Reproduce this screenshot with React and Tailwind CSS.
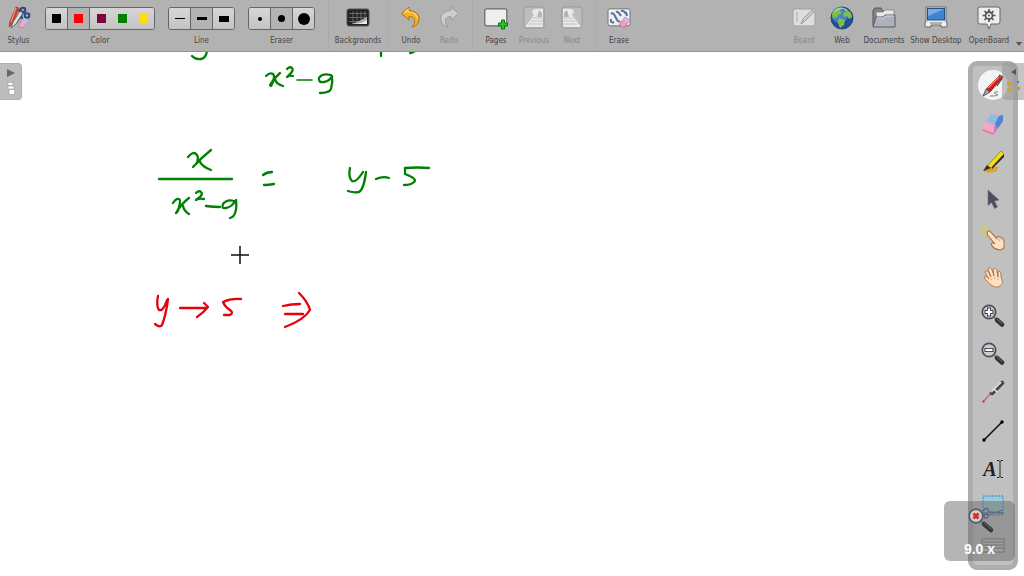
const COLORS = [
  { name: 'Black', css: 'bg-black' },
  { name: 'Red', css: 'bg-[#ff0000]' },
  { name: 'Purple', css: 'bg-[#800040]' },
  { name: 'Green', css: 'bg-[#008000]' },
  { name: 'Yellow', css: 'bg-[#ffdd00]' },
];

const LINES = [
  { name: 'Fine line', css: 'w-[10px] h-px' },
  { name: 'Medium line', css: 'w-[10px] h-[3px]' },
  { name: 'Strong line', css: 'w-[10px] h-[6px]' },
];

const ERASERS = [
  { name: 'Small eraser', css: 'size-1 rounded-full' },
  { name: 'Medium eraser', css: 'size-[7px] rounded-full' },
  { name: 'Large eraser', css: 'size-3 rounded-full' },
];

const Icon = ({ children, size = 24 }) => (
  <svg width={size} height={size} viewBox="0 0 24 24" fill="none" aria-hidden="true" className="shrink-0">
    {children}
  </svg>
);

const StylusIcon = () => (
  <Icon>
    <path d="M12 3 15 13M17 5 9 17" stroke="#2e4372" strokeWidth="2.2" />
    <circle cx="16" cy="4" r="2.3" stroke="#2b4680" strokeWidth="2" />
    <circle cx="20" cy="9.500" r="2.300" stroke="#2b4680" strokeWidth="2" />
    <path d="M9 1 12 2 6 17 2 21 3 15Z" fill="#d9412c" stroke="#8f3027" strokeWidth=".6" />
    <path d="m9 2-5 14" stroke="#f2a08f" />
    <path d="M13 5 16 7 9 18 4 22 6 16Z" fill="#dedede" stroke="#555" strokeWidth=".8" />
    <path d="m12 19 5-7 5 2-5 7-4 1Z" fill="#f6a9c7" stroke="#a77993" strokeWidth=".6" />
    <path d="m15 14.500 2-2.500 5 2-2 3Z" fill="#a8c4ef" />
  </Icon>
);

const BackgroundsIcon = () => (
  <Icon>
    <rect x="1" y="3" width="22" height="17" rx="2" fill="#222" stroke="#555" />
    <path d="M3 7.500h18M3 11.500h18M3 15.500h18M7 5v13M11 5v13M15 5v13M19 5v13" stroke="#777" strokeWidth=".8" />
    <path d="m5 18 6-2 10-5v7Z" fill="#aaa" />
    <path d="m7 18 8-1 6-3v4Z" fill="#ececec" />
  </Icon>
);

const UndoIcon = () => (
  <Icon>
    <path
      d="M2.500 7.500 10 1v3.500c7 .5 10.500 4 10 9.500c-.5 4-3.500 6.500-7 7c4-4 4-10.500-3-10.500V14Z"
      fill="#f5b01c"
      stroke="#a8731d"
      strokeLinejoin="round"
    />
    <path d="M5 7 9 3.500v2.500c6 .3 9 3 9.500 7" stroke="#ffdd76" strokeWidth="1.200" />
  </Icon>
);

const RedoIcon = () => (
  <Icon>
    <path
      d="M21.500 7.500 14 1v3.500c-7 .5-10.500 4-10 9.500c.5 4 3.500 6.500 7 7c-4-4-4-10.500 3-10.500V14Z"
      fill="#cecece"
      stroke="#9a9a9a"
      strokeLinejoin="round"
    />
  </Icon>
);

const PagesIcon = () => (
  <Icon>
    <rect x=".8" y="2.800" width="22" height="17" rx="2" fill="#eee" stroke="#666" strokeWidth="1.200" />
    <path d="M17.500 14h3v3h3v3h-3v3h-3v-3h-3v-3h3Z" fill="#25c225" stroke="#087a08" />
  </Icon>
);

const PreviousIcon = () => (
  <Icon>
    <rect x="2" y="1" width="20" height="21" rx="2" fill="#bdbdbd" stroke="#999" />
    <path d="M3 21 12 9 10 6c0-3 4-4 11-3v18Z" fill="#e9e9e9" />
    <path d="M11 12h10M9 15h12M7 18h14" stroke="#c2c2c2" />
    <path d="M17 4 20 7v4h-5Z" fill="#b5b5b5" />
  </Icon>
);

const NextIcon = () => (
  <Icon>
    <rect x="2" y="1" width="20" height="21" rx="2" fill="#bdbdbd" stroke="#999" />
    <path d="m21 21-9-12 2-3c0-3-4-4-11-3v18Z" fill="#e9e9e9" />
    <path d="M13 12H3M15 15H3M17 18H3" stroke="#c2c2c2" />
    <path d="M7 4 4 7v4h5Z" fill="#b5b5b5" />
  </Icon>
);

const ErasePageIcon = () => (
  <Icon>
    <rect x="1" y="2.800" width="22" height="17" rx="2" fill="#f0f0f0" stroke="#777" />
    <path d="M4 13c-1 3 1 4 3 3M4 8c2-2 3 0 5 4s3 4 4 3M9 6c2-1 3 1 5 4M14 5c3-1 4 1 5 3M19 6l1 4" stroke="#56749d" strokeWidth="2" />
    <path d="m12 19 6-8 5 3-6 8Z" fill="#f49ac6" stroke="#a9668a" strokeWidth=".7" />
    <path d="m16 14 2-3 5 3-2 3Z" fill="#d9b4df" />
  </Icon>
);

const BoardIcon = () => (
  <Icon>
    <rect x="1" y="3" width="22" height="17" rx="2" fill="#dedede" stroke="#a1a1a1" />
    <path d="M5 6v10" stroke="#aaa" />
    <path d="m9 18 2-5 9-9 2 2-9 9Z" fill="#ccc" stroke="#999" />
  </Icon>
);

const WebIcon = () => (
  <Icon>
    <circle cx="12" cy="12" r="11" fill="#214d9d" stroke="#29486e" />
    <circle cx="10" cy="9" r="8" fill="#4482cc" />
    <path d="M2 8c2-5 6-7 10-6l-2 3 2 2-4 2-1 3-3-1-1 3ZM14 3c5 1 8 4 8 8l-3 2-2-3-3 1-1-4 3-1ZM9 12l6 2-1 5-4 3-2-5Z" fill="#82bf3d" />
    <path d="M4 6c3-4 9-5 13-2" stroke="#c4def3" strokeWidth="1.200" opacity=".7" />
  </Icon>
);

const DocumentsIcon = () => (
  <Icon>
    <path d="M1 20V4l2-2h6l2 3h8v5" fill="#82858c" stroke="#555" />
    <path d="M4 6h7l2-2h9v14H5Z" fill="#e8e8e8" stroke="#777" strokeWidth=".7" />
    <path d="m1 21 3-10h7l2-2h10v12H1Z" fill="#aeb1ba" stroke="#555b66" />
    <path d="M5 12h6l3-2h8" stroke="#d8d9de" />
  </Icon>
);

const DesktopIcon = () => (
  <Icon>
    <path d="M2 1h20v15h1v5h-6v-2H7v2H1v-5h1Z" fill="#eee" stroke="#666" />
    <rect x="3.500" y="2.500" width="17" height="11.500" fill="#4084d1" stroke="#254f86" />
    <path d="M4 3h16L4 10Z" fill="#78ace5" />
    <path d="M6 17h12" stroke="#777" />
  </Icon>
);

const OpenBoardIcon = () => (
  <Icon>
    <path d="M3 1h18q2 0 2 2v13q0 2-2 2h-7l-2 5-2-5H3q-2 0-2-2V3q0-2 2-2Z" fill="#eee" stroke="#666" />
    <circle cx="12" cy="9.500" r="3.500" stroke="#555" strokeWidth="1.800" />
    <path d="M12 3v3M12 13v3M5.500 9.500h3M15.500 9.500h3M7.500 5l2 2M14.500 12l2 2M16.500 5l-2 2M9.500 12l-2 2" stroke="#555" strokeWidth="1.700" />
    <circle cx="12" cy="9.500" r="1" fill="#555" />
  </Icon>
);

const PenIcon = () => (
  <Icon>
    <path d="m6 15 12-12 3 2L10 18l-7 4Z" fill="#d51818" stroke="#741c1c" strokeWidth=".7" />
    <path d="m7 15 11-11" stroke="#ff8377" strokeWidth="1.200" />
    <path d="m5 16 4 3-7 4Z" fill="#aaa" stroke="#444" strokeWidth=".8" />
    <path d="m18 2 4 2-6 9" stroke="#444" strokeWidth="1.200" />
    <path d="M9 23c7 0 10-1 6-2s0-3 2-2" stroke="#777" />
  </Icon>
);

const EraserIcon = () => (
  <Icon>
    <path d="M10 2 22 3 13 21 1 17Z" fill="#f6a5c9" />
    <path d="m10 2 8 2-4 9-9-3Z" fill="#91bce0" />
    <path d="m18 4 4-1v6l-9 13v-7Z" fill="#c37fb5" />
    <path d="m18 4 4-1v6l-5 7-3-4Z" fill="#4d86d8" />
    <path d="m1 17 12 4-1 2-10-4Z" fill="#e8769f" />
  </Icon>
);

const MarkerIcon = () => (
  <Icon>
    <path d="M3 21c9-5 14-5 15-4s-4 2-1 3c-4 3-9 3-13 2" fill="#dda52a" />
    <path d="M7 15 20 1l3 3-12 13-8 4Z" fill="#f6dc12" stroke="#817519" strokeWidth=".7" />
    <path d="M11 17 23 4v3L11 19Z" fill="#292929" />
    <path d="m6 15 4 3-8 3Z" fill="#333" />
  </Icon>
);

const ArrowIcon = () => (
  <Icon>
    <path d="m7 2 11 10-4.500 1 3 6-3 1.500-3-6-3.500 3Z" fill="#4b5061" stroke="#696d7b" strokeWidth=".6" />
  </Icon>
);

const PointIcon = () => (
  <Icon size={28}>
    <path d="M5 0v4M5 7v3M0 5h4M7 5h3M1.500 1.500 3 3M7 3l1.500-1.500M2 8.500 3.500 7" stroke="#d4cf45" strokeWidth="1.200" />
    <path d="M7 6c1-1.500 2.500-.7 3.500.5l4.500 5c0-2 2-2 3.500-1c2.500 0 3 2 3 5v4l-3 2c-4-.5-7-2-8-5 0-1.500 2-1 3-.5L7.500 9Z" fill="#ffdfc2" stroke="#a66f48" strokeWidth=".9" />
    <path d="m16 11 2 3M18.500 11l1 2" stroke="#c99270" strokeWidth=".7" />
  </Icon>
);

const HandIcon = () => (
  <Icon>
    <path d="M10 20C7 17 4 15 3 12c2-2 3 1 5 2L4 7c1-2 3-1 4 1l2 4L7 4c1-2.500 3-1 4 1l2 6-1-7c2-2 3 0 4 2l1 6V7c3-2 3 2 3 5 2 5 2 7-1 9-3 2-6 1-9-1Z" fill="#ffdfc2" stroke="#a66f48" strokeWidth=".9" />
    <path d="m9 13 2 2M13 12l1 2M17 13v2" stroke="#cb9674" strokeWidth=".7" />
  </Icon>
);

const Zoomer = ({ children }) => (
  <Icon>
    <path d="m13 13 3 3" stroke="#888" strokeWidth="2" />
    <path d="m16 16 5 4.500" stroke="#343434" strokeWidth="4.500" strokeLinecap="round" />
    <path d="m16 15 5 4.500" stroke="#777" strokeWidth="1" strokeLinecap="round" />
    <circle cx="8" cy="8" r="6.700" fill="#c9ccd1" stroke="#4b4e57" strokeWidth="1.700" />
    {children}
  </Icon>
);

const ZoomInIcon = () => (
  <Zoomer>
    <path d="M8 3.500v9M3.500 8h9" stroke="#3c3e45" strokeWidth="4" />
    <path d="M8 4.500v7M4.500 8h7" stroke="#fff" strokeWidth="2.200" />
  </Zoomer>
);

const ZoomOutIcon = () => (
  <Zoomer>
    <path d="M3.500 8h9" stroke="#3c3e45" strokeWidth="4" />
    <path d="M4.500 8h7" stroke="#fff" strokeWidth="2.200" />
  </Zoomer>
);

const LaserIcon = () => (
  <Icon>
    <path d="m2 22 9-10" stroke="#d36868" strokeWidth="1.500" />
    <circle cx="2.500" cy="21.500" r="1.200" fill="#d63d3d" />
    <path d="M11 13 21 3" stroke="#444" strokeWidth="4.500" strokeLinecap="round" />
    <path d="m10 12 10-10" stroke="#d9d9d9" strokeWidth="2" />
    <path d="m13 9 3 3" stroke="#fff" strokeWidth="1.200" />
  </Icon>
);

const LineIcon = () => (
  <Icon>
    <path d="m3 21 18-18" stroke="#111" strokeWidth="1.600" />
    <circle cx="3" cy="21" r="1.700" fill="#000" />
    <circle cx="21" cy="3" r="1.700" fill="#000" />
  </Icon>
);

const TextIcon = () => (
  <span className="flex items-center font-['Liberation_Serif',serif] text-xl leading-6 font-bold italic text-[#222]">
    A
    <svg width="6" height="18" viewBox="0 0 6 18" fill="none" stroke="#222" aria-hidden="true">
      <path d="M0 .5h2l1 1 1-1h2M3 1v16M0 17.500h2l1-1 1 1h2" />
    </svg>
  </span>
);

const CaptureIcon = () => (
  <Icon>
    <rect x="2" y="1" width="20" height="19" fill="#9ccbd0" stroke="#2f7ff0" strokeDasharray="2 1" />
    <path d="m7 17 15 1M7 20l15-5" stroke="#596b91" strokeWidth="1.300" />
    <circle cx="5" cy="16" r="2.500" stroke="#4f6696" strokeWidth="1.300" />
    <circle cx="5" cy="21" r="2" stroke="#4f6696" strokeWidth="1.300" />
  </Icon>
);

const KeyboardIcon = () => (
  <Icon>
    <rect x="1" y="5" width="22" height="13" fill="#ccc" stroke="#777" />
    <path d="M2 8h20M2 11h20M2 14h20" stroke="#777" />
  </Icon>
);

const TOOLS = [
  { name: 'Annotate document', icon: PenIcon, active: true },
  { name: 'Erase annotation', icon: EraserIcon },
  { name: 'Highlight', icon: MarkerIcon },
  { name: 'Select and modify objects', icon: ArrowIcon },
  { name: 'Interact with items', icon: PointIcon },
  { name: 'Scroll page', icon: HandIcon },
  { name: 'Zoom in', icon: ZoomInIcon },
  { name: 'Zoom out', icon: ZoomOutIcon },
  { name: 'Virtual laser pointer', icon: LaserIcon },
  { name: 'Draw lines', icon: LineIcon },
  { name: 'Write text', icon: TextIcon },
  { name: 'Capture part of the screen', icon: CaptureIcon },
  { name: 'Virtual keyboard', icon: KeyboardIcon },
];

const ToolbarButton = ({ label, icon: IconImage, disabled, width = 'w-[38px]' }) => (
  <button
    disabled={disabled}
    className={`${width} shrink-0 flex flex-col items-center gap-1 pt-[6px] whitespace-nowrap ${
      disabled ? 'text-[#888]' : 'text-[#444]'
    }`}
  >
    <IconImage />
    <span className="leading-[14px]">{label}</span>
  </button>
);

const ButtonGroup = ({ label, items, active, width, marker = 'bg-black' }) => (
  <div role="group" aria-label={label} className="shrink-0 flex flex-col items-center gap-1 pt-[7px] text-[#444]">
    <div className={`${width} flex h-[23px] rounded-[3px] border border-[#666] overflow-hidden`}>
      {items.map((item, i) => (
        <button
          key={item.name}
          aria-label={item.name}
          aria-pressed={i === active}
          className={`flex flex-1 items-center justify-center border-[#666] ${
            i === active ? 'bg-[#b3b3b3] border-x' : 'bg-linear-to-b from-[#d6d6d6] to-[#c3c3c3]'
          }`}
        >
          <span className={`${marker} ${item.css}`} />
        </button>
      ))}
    </div>
    <span className="leading-[14px]">{label}</span>
  </div>
);

const ToolGroup = ({ children }) => (
  <div className="flex shrink-0 border-l border-[#aaa] px-1">{children}</div>
);

const Toolbar = () => (
  <header className="flex h-[52px] shrink-0 justify-between border-b border-[#929292] bg-[#b2b2b2] font-['DejaVu_Sans_Condensed','DejaVu_Sans',sans-serif] text-[8px]">
    <div className="flex shrink-0">
      <div className="flex gap-[13px] pr-[13px]">
        <div className="flex gap-2">
          <ToolbarButton label="Stylus" icon={StylusIcon} width="w-[37px]" />
          <ButtonGroup label="Color" items={COLORS} active={1} width="w-[110px]" marker="size-[9px]" />
        </div>
        <ButtonGroup label="Line" items={LINES} active={1} width="w-[67px]" />
        <ButtonGroup label="Eraser" items={ERASERS} active={1} width="w-[67px]" />
      </div>
      <ToolGroup>
        <ToolbarButton label="Backgrounds" icon={BackgroundsIcon} width="w-[50px]" />
      </ToolGroup>
      <ToolGroup>
        <ToolbarButton label="Undo" icon={UndoIcon} />
        <ToolbarButton label="Redo" icon={RedoIcon} disabled />
      </ToolGroup>
      <ToolGroup>
        <ToolbarButton label="Pages" icon={PagesIcon} />
        <ToolbarButton label="Previous" icon={PreviousIcon} disabled />
        <ToolbarButton label="Next" icon={NextIcon} disabled />
      </ToolGroup>
      <ToolGroup>
        <ToolbarButton label="Erase" icon={ErasePageIcon} />
      </ToolGroup>
    </div>
    <nav className="flex shrink-0">
      <ToolbarButton label="Board" icon={BoardIcon} disabled />
      <ToolbarButton label="Web" icon={WebIcon} />
      <ToolbarButton label="Documents" icon={DocumentsIcon} width="w-[46px]" />
      <ToolbarButton label="Show Desktop" icon={DesktopIcon} width="w-[58px]" />
      <ToolbarButton label="OpenBoard" icon={OpenBoardIcon} width="w-12" />
      <button aria-label="More" className="flex w-[11px] items-end justify-center pb-[5px]">
        <svg width="6" height="4" viewBox="0 0 6 4" aria-hidden="true">
          <path d="M0 0h6L3 4Z" fill="#555" />
        </svg>
      </button>
    </nav>
  </header>
);

// Pen strokes, in board coordinates measured from the top left corner
const Ink = () => (
  <svg
    viewBox="0 52 480 300"
    width="480"
    height="300"
    fill="none"
    strokeWidth="2.300"
    strokeLinecap="round"
    strokeLinejoin="round"
    className="absolute top-0 left-0"
    role="img"
    aria-label="x / (x² − 9) = y − 5, y → 5 ⇒"
  >
    <g stroke="#008000">
      <path d="M192 56q4 4 9 3q5-1 6-8M381 49v7M410 53q3 0 5-2" />
      <path d="M266 76q4-4 7-2q2 2 0 8l-2 4M280 73q-6 5-10 12M275 79q1 5 8 7" />
      <path d="M287 69q3-3 5-1q2 2-2 6l-3 3q3-2 6-1" />
      <path d="M297 80h15" strokeWidth="1.600" />
      <path d="M331 75q-9-2-12 3q-1 5 5 4q6-1 8-6q1 6-1 13q-2 4-11 4" />
      <path d="M188 157q5-6 8-3q3 2 1 9M211 150q-10 8-18 17M199 160q3 7 12 10" />
      <path d="M159 179q37 0 73 0" />
      <path d="M173 203q3-5 6-4q2 1 0 8q-1 5-3 6M189 198q-8 6-13 15M183 206q1 5 6 8" />
      <path d="M196 193q3-3 5-1q2 2-1 5l-4 3q3-2 8-1M206 206q7 1 14 1" />
      <path d="M234 201q-7-2-11 3q-2 5 3 4q6-1 10-8q1 9-1 13q-1 4-5 5" />
      <path d="M263 175q4-3 9-3M264 185q5 0 10-1" />
      <path d="M350 168q-2 9 2 13q4 2 11-9M366 172q-2 17-7 20q-5 1-11-1M376 179q7-3 13-1" />
      <path d="M429 168q-11-1-24 0q0 4 0 6q13 5 9 8q-3 3-10 3" />
    </g>
    <g stroke="#e8000a">
      <path d="M158 296q-2 10 1 14q4 2 8-10M168 299q-2 16-6 26q-2 3-7-1M180 308h27M204 303q2 2 4 4q-5 6-11 10" />
      <path d="M241 299q-10-1-18 3q2 5 7 8q4 3 0 5h-6" />
      <path d="M283 306q8-2 17-2M285 314h18M299 293q9 9 11 17q-6 10-25 17" />
    </g>
    <path d="M231 255h18M240 246v18" stroke="#111" strokeWidth="1.500" strokeLinecap="butt" />
  </svg>
);

const PagesTab = () => (
  <button
    aria-label="Show pages"
    className="z-10 mt-[11px] flex h-[37px] w-[22px] flex-col items-center justify-center gap-[5px] rounded-r-sm bg-[#bdbdbd] border-y border-r border-[#b0b0b0]"
  >
    <svg width="8" height="8" viewBox="0 0 8 8" aria-hidden="true">
      <path d="M0 0 8 4 0 8Z" fill="#666" />
    </svg>
    <svg width="8" height="13" viewBox="0 0 8 13" fill="#fff" stroke="#999" strokeWidth=".6" aria-hidden="true">
      <path d="M1 .5h5v3H1ZM1 4h6v3H1ZM2 7.500h5.500v5H2Z" />
    </svg>
  </button>
);

const Palette = () => (
  <div
    role="toolbar"
    aria-label="Drawing tools"
    className="z-10 mt-[9px] mr-[6px] mb-[6px] flex w-[50px] flex-col rounded-[9px] border-[5px] border-[#adadad] bg-[#c0c0c0]"
  >
    {TOOLS.map(({ name, icon: ToolIcon, active }) => (
      <button key={name} aria-label={name} aria-pressed={!!active} className="flex flex-1 items-center justify-center">
        <span className={`flex size-[30px] items-center justify-center ${active ? 'rounded-full bg-[#f4f4f4]' : ''}`}>
          <ToolIcon />
        </span>
      </button>
    ))}
  </div>
);

const LibraryTab = () => (
  <button
    aria-label="Show library"
    className="absolute top-[11px] right-0 z-20 flex h-[37px] w-[22px] flex-col items-center gap-1 rounded-l-sm bg-[#969696]/55 pt-[6px]"
  >
    <svg width="5" height="6" viewBox="0 0 5 6" aria-hidden="true">
      <path d="M5 0v6L0 3Z" fill="#555" />
    </svg>
    <svg width="18" height="14" viewBox="0 0 18 14" aria-hidden="true">
      <path d="M3 3h5v4H3ZM3 9h5v3H3Z" fill="#c9a63a" />
      <path d="M13 2h2v2h-2Z" fill="#4a7dbb" />
      <path d="M13 8h3v3h-3Z" fill="#e58a35" />
    </svg>
  </button>
);

const ZoomBadge = () => (
  <div className="absolute right-[9px] bottom-[15px] z-20 flex h-[60px] w-[71px] flex-col items-center rounded-md bg-[#6c6c6c]/50 pt-1 font-['Liberation_Sans',sans-serif] text-sm leading-4 font-bold text-white">
    <svg width="32" height="32" viewBox="0 0 32 32" fill="none" aria-hidden="true">
      <path d="m17 16 4 4" stroke="#777" strokeWidth="2" />
      <path d="m20 19 7 6" stroke="#373737" strokeWidth="4.500" strokeLinecap="round" />
      <path d="m20 18 7 6" stroke="#6d6d6d" strokeLinecap="round" />
      <circle cx="12" cy="11" r="6.800" fill="#cfcfd2" stroke="#535d74" strokeWidth="1.700" />
      <path d="m9.500 8.500 5 5M14.500 8.500l-5 5" stroke="#e32c20" strokeWidth="3" />
    </svg>
    <span className="mt-1">9.0 x</span>
  </div>
);

const App = () => (
  <div className="flex min-h-screen flex-col bg-white">
    <Toolbar />
    <main className="relative flex flex-1 justify-between overflow-hidden">
      <Ink />
      <PagesTab />
      <Palette />
      <LibraryTab />
      <ZoomBadge />
    </main>
  </div>
);

export default App;
